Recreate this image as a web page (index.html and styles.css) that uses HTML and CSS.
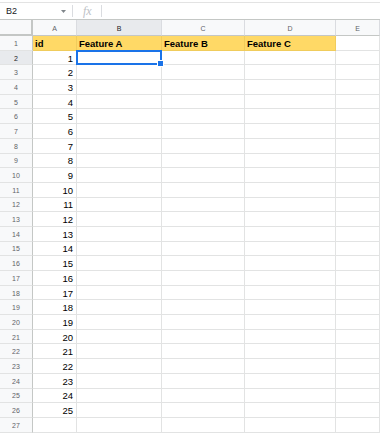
FILE: index.html
```html
<!DOCTYPE html>
<html lang="en">
<head>
    <title>Sheet</title>
    <link rel="stylesheet" href="styles.css">
</head>
<body>
    <div class="formula-bar">
        <div class="name-box">
            <span>B2</span>
            <svg class="arrow" width="5" height="3" viewBox="0 0 5 3"><path d="M0 0h5L2.5 3z" fill="#80868b"/></svg>
        </div>
        <div class="sep"></div>
        <div class="fx">fx</div>
        <div class="sep"></div>
    </div>
    <div class="sheet" id="sheet">
        <div class="cell corner"></div>
        <div class="cell col-head">A</div>
        <div class="cell col-head active">B</div>
        <div class="cell col-head">C</div>
        <div class="cell col-head">D</div>
        <div class="cell col-head">E</div>

        <div class="cell row-head">1</div>
        <div class="cell head-fill">id</div>
        <div class="cell head-fill">Feature A</div>
        <div class="cell head-fill">Feature B</div>
        <div class="cell head-fill">Feature C</div>
        <div class="cell"></div>
    </div>
    <script>
        const sheet = document.getElementById('sheet');

        function addCell(cls, text) {
            const el = document.createElement('div');
            el.className = 'cell ' + cls;
            el.textContent = text;
            sheet.appendChild(el);
            return el;
        }

        for (let r = 2; r <= 27; r++) {
            addCell(r === 2 ? 'row-head active' : 'row-head', r);
            addCell('num', r <= 26 ? r - 1 : '');
            const b = addCell(r === 2 ? 'selected' : '', '');
            if (r === 2) {
                const h = document.createElement('span');
                h.className = 'handle';
                b.appendChild(h);
            }
            addCell('', '');
            addCell('', '');
            addCell('', '');
        }
    </script>
</body>
</html>
```

FILE: styles.css
```css
body {
    margin: 0;
    font-family: "Liberation Sans", Arial, sans-serif;
    background: #fff;
    overflow: hidden;
}

.formula-bar {
    margin-top: 2px;
    height: 16px;
    border-top: 1px solid #e3e3e3;
    border-bottom: 1px solid #c4c7c5;
    display: flex;
    align-items: center;
}

.name-box {
    width: 72px;
    box-sizing: border-box;
    padding: 0 6px 0 6px;
    display: flex;
    justify-content: space-between;
    align-items: center;
    font-size: 9px;
    color: #202124;
}

.sep {
    width: 1px;
    height: 12px;
    background: #dadce0;
}

.fx {
    font-family: "Liberation Serif", serif;
    font-style: italic;
    font-size: 12px;
    color: #bdc1c6;
    padding: 0 9px 0 10px;
}

.sheet {
    display: grid;
    grid-template-columns: 33px 44px 85px 83px 91px 1fr;
    grid-template-rows: 16px;
    grid-auto-rows: 14.7px;
}

.cell {
    box-sizing: border-box;
    border-right: 1px solid #e2e3e3;
    border-bottom: 1px solid #e2e3e3;
    display: flex;
    align-items: center;
    padding: 1px 2px 0 2px;
    font-size: 9.5px;
    color: #000;
    white-space: nowrap;
    overflow: hidden;
}

.corner,
.col-head,
.row-head {
    background: #f8f9fa;
    border-color: #c4c7c5;
    color: #5f6368;
    font-size: 7px;
    justify-content: center;
}

.corner {
    border-right: 2px solid #c4c7c5;
    border-bottom: 2px solid #c4c7c5;
}

.row-head {
    border-bottom-color: #e2e3e3;
}

.col-head {
    border-right-color: #dadce0;
}

.active {
    background: #e8eaed;
    color: #202124;
}

.head-fill {
    background: #ffd966;
    border-color: #f0cc5c;
    font-weight: bold;
}

.num {
    justify-content: flex-end;
    padding-right: 3px;
}

.selected {
    position: relative;
    overflow: visible;
}

.selected::after {
    content: "";
    position: absolute;
    left: -1px;
    top: -1px;
    right: -1px;
    bottom: -1px;
    border: 2px solid #1a73e8;
}

.handle {
    position: absolute;
    right: -3px;
    bottom: -3px;
    width: 5px;
    height: 5px;
    background: #1a73e8;
    border: 1px solid #fff;
    z-index: 1;
}
```
